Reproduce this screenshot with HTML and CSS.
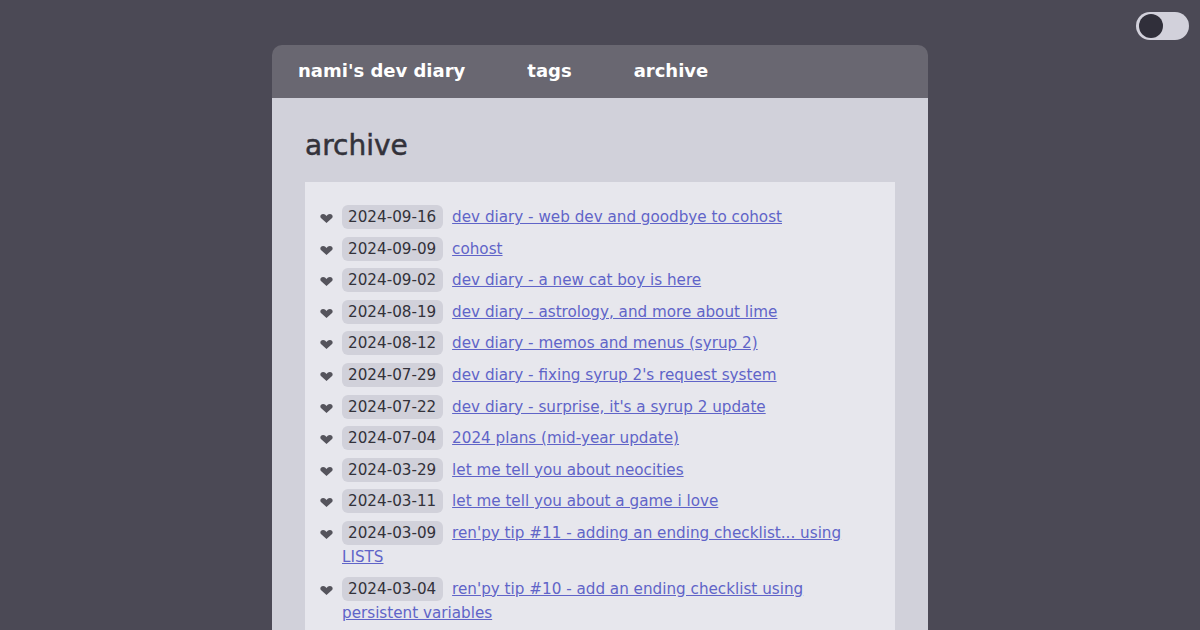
FILE: index.html
```html
<!DOCTYPE html>
<html lang="en">
<head>
  <meta charset="UTF-8">
  <title>archive - nami's dev diary</title>
  <link rel="stylesheet" href="styles.css">
</head>
<body>
  <button class="theme-toggle" aria-label="toggle theme"><span class="knob"></span></button>

  <div class="wrapper">
    <nav class="topnav">
      <a href="#">nami's dev diary</a>
      <a href="#">tags</a>
      <a href="#">archive</a>
    </nav>

    <main class="content">
      <h1>archive</h1>
      <div class="archive-box">
        <ul class="posts">
          <li><svg class="heart" viewBox="0 0 13 9"><path d="M6.5 9L1.2 4.3C-0.6 2.6 0.6 0 3.1 0C4.6 0 5.6 0.9 6.5 1.9C7.4 0.9 8.4 0 9.9 0C12.4 0 13.6 2.6 11.8 4.3Z"/></svg><span class="date">2024-09-16</span> <a href="#">dev diary - web dev and goodbye to cohost</a></li>
          <li><svg class="heart" viewBox="0 0 13 9"><path d="M6.5 9L1.2 4.3C-0.6 2.6 0.6 0 3.1 0C4.6 0 5.6 0.9 6.5 1.9C7.4 0.9 8.4 0 9.9 0C12.4 0 13.6 2.6 11.8 4.3Z"/></svg><span class="date">2024-09-09</span> <a href="#">cohost</a></li>
          <li><svg class="heart" viewBox="0 0 13 9"><path d="M6.5 9L1.2 4.3C-0.6 2.6 0.6 0 3.1 0C4.6 0 5.6 0.9 6.5 1.9C7.4 0.9 8.4 0 9.9 0C12.4 0 13.6 2.6 11.8 4.3Z"/></svg><span class="date">2024-09-02</span> <a href="#">dev diary - a new cat boy is here</a></li>
          <li><svg class="heart" viewBox="0 0 13 9"><path d="M6.5 9L1.2 4.3C-0.6 2.6 0.6 0 3.1 0C4.6 0 5.6 0.9 6.5 1.9C7.4 0.9 8.4 0 9.9 0C12.4 0 13.6 2.6 11.8 4.3Z"/></svg><span class="date">2024-08-19</span> <a href="#">dev diary - astrology, and more about lime</a></li>
          <li><svg class="heart" viewBox="0 0 13 9"><path d="M6.5 9L1.2 4.3C-0.6 2.6 0.6 0 3.1 0C4.6 0 5.6 0.9 6.5 1.9C7.4 0.9 8.4 0 9.9 0C12.4 0 13.6 2.6 11.8 4.3Z"/></svg><span class="date">2024-08-12</span> <a href="#">dev diary - memos and menus (syrup 2)</a></li>
          <li><svg class="heart" viewBox="0 0 13 9"><path d="M6.5 9L1.2 4.3C-0.6 2.6 0.6 0 3.1 0C4.6 0 5.6 0.9 6.5 1.9C7.4 0.9 8.4 0 9.9 0C12.4 0 13.6 2.6 11.8 4.3Z"/></svg><span class="date">2024-07-29</span> <a href="#">dev diary - fixing syrup 2's request system</a></li>
          <li><svg class="heart" viewBox="0 0 13 9"><path d="M6.5 9L1.2 4.3C-0.6 2.6 0.6 0 3.1 0C4.6 0 5.6 0.9 6.5 1.9C7.4 0.9 8.4 0 9.9 0C12.4 0 13.6 2.6 11.8 4.3Z"/></svg><span class="date">2024-07-22</span> <a href="#">dev diary - surprise, it's a syrup 2 update</a></li>
          <li><svg class="heart" viewBox="0 0 13 9"><path d="M6.5 9L1.2 4.3C-0.6 2.6 0.6 0 3.1 0C4.6 0 5.6 0.9 6.5 1.9C7.4 0.9 8.4 0 9.9 0C12.4 0 13.6 2.6 11.8 4.3Z"/></svg><span class="date">2024-07-04</span> <a href="#">2024 plans (mid-year update)</a></li>
          <li><svg class="heart" viewBox="0 0 13 9"><path d="M6.5 9L1.2 4.3C-0.6 2.6 0.6 0 3.1 0C4.6 0 5.6 0.9 6.5 1.9C7.4 0.9 8.4 0 9.9 0C12.4 0 13.6 2.6 11.8 4.3Z"/></svg><span class="date">2024-03-29</span> <a href="#">let me tell you about neocities</a></li>
          <li><svg class="heart" viewBox="0 0 13 9"><path d="M6.5 9L1.2 4.3C-0.6 2.6 0.6 0 3.1 0C4.6 0 5.6 0.9 6.5 1.9C7.4 0.9 8.4 0 9.9 0C12.4 0 13.6 2.6 11.8 4.3Z"/></svg><span class="date">2024-03-11</span> <a href="#">let me tell you about a game i love</a></li>
          <li><svg class="heart" viewBox="0 0 13 9"><path d="M6.5 9L1.2 4.3C-0.6 2.6 0.6 0 3.1 0C4.6 0 5.6 0.9 6.5 1.9C7.4 0.9 8.4 0 9.9 0C12.4 0 13.6 2.6 11.8 4.3Z"/></svg><span class="date">2024-03-09</span> <a href="#">ren'py tip #11 - adding an ending checklist... using LISTS</a></li>
          <li><svg class="heart" viewBox="0 0 13 9"><path d="M6.5 9L1.2 4.3C-0.6 2.6 0.6 0 3.1 0C4.6 0 5.6 0.9 6.5 1.9C7.4 0.9 8.4 0 9.9 0C12.4 0 13.6 2.6 11.8 4.3Z"/></svg><span class="date">2024-03-04</span> <a href="#">ren'py tip #10 - add an ending checklist using persistent variables</a></li>
        </ul>
      </div>
    </main>
  </div>
</body>
</html>
```

FILE: styles.css
```css
body {
  margin: 0;
  background-color: #4b4955;
  font-family: "DejaVu Sans", Verdana, sans-serif;
  color: #33323a;
}
.theme-toggle {
  position: absolute;
  top: 12px;
  right: 11px;
  width: 53px;
  height: 28px;
  padding: 0;
  border: none;
  border-radius: 14px;
  background-color: #d2d1db;
  cursor: pointer;
}
.theme-toggle .knob {
  position: absolute;
  top: 2px;
  left: 3px;
  width: 24px;
  height: 24px;
  border-radius: 50%;
  background-color: #302f3a;
}
.wrapper {
  width: 656px;
  margin: 45px auto 0;
}
.topnav {
  display: flex;
  gap: 62px;
  height: 51px;
  padding-bottom: 2px;
  align-items: center;
  padding-left: 26px;
  background-color: #696771;
  border-radius: 10px 10px 0 0;
}
.topnav a {
  color: #fff;
  font-size: 18px;
  font-weight: bold;
  text-decoration: none;
}
.content {
  padding: 31px 33px 40px;
  background-color: #d1d1da;
}
h1 {
  margin: 0 0 19px;
  font-size: 28px;
  font-weight: normal;
  line-height: 34px;
  color: #33323a;
  -webkit-text-stroke: 0.5px #33323a;
}
.archive-box {
  padding: 23px 15px 20px;
  background-color: #e7e7ed;
}
.posts {
  list-style: none;
  margin: 0;
  padding: 0;
  font-size: 15.2px;
  line-height: 24px;
}
.posts li {
  position: relative;
  padding-left: 22px;
  margin-bottom: 7.6px;
}
.heart {
  position: absolute;
  left: 0;
  top: 9px;
  width: 13px;
  height: 9px;
  fill: #55545c;
}
.date {
  display: inline-block;
  padding: 0 7px 0 6px;
  margin-right: 4px;
  border-radius: 6px;
  background-color: #d1d1da;
  color: #33323a;
}
.posts a {
  color: #6064c8;
}
```
